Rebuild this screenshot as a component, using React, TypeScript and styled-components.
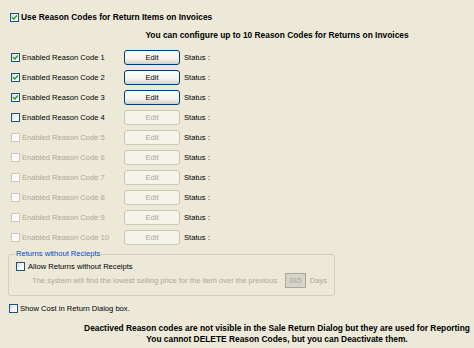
import styled, { createGlobalStyle } from "styled-components";

const GlobalStyle = createGlobalStyle`
  html, body {
    margin: 0;
    padding: 0;
    background: #ece9d8;
  }
  body {
    font-family: "Liberation Sans", Arial, sans-serif;
    font-size: 7.6px;
    color: #000;
  }
`;

const Page = styled.div`
  width: 474px;
  height: 348px;
  box-sizing: border-box;
  padding-top: 7px;
  background: #ece9d8;
  overflow: hidden;
`;

const Box = styled.span<{ $disabled?: boolean }>`
  width: 9px;
  height: 9px;
  flex: none;
  box-sizing: border-box;
  border: 1px solid ${(p) => (p.$disabled ? "#cac8bb" : "#1c5180")};
  background: ${(p) =>
    p.$disabled ? "#fff" : "linear-gradient(135deg, #dcdcd7 0%, #fff 80%)"};
  display: flex;
  align-items: center;
  justify-content: center;
`;

const CheckBox = ({ checked, disabled }: { checked?: boolean; disabled?: boolean }) => (
  <Box $disabled={disabled}>
    {checked && (
      <svg width="7" height="7" viewBox="0 0 7 7">
        <path d="M1 3.2 L2.8 5 L6 1.5" stroke="#21a121" strokeWidth="1.5" fill="none" />
      </svg>
    )}
  </Box>
);

const HeaderRow = styled.label`
  display: flex;
  align-items: center;
  gap: 2px;
  height: 20px;
  padding-left: 10px;
  font-weight: bold;
  font-size: 8.4px;
  white-space: nowrap;
`;

const Centered = styled.div<{ $lh: number }>`
  padding-left: 80px;
  text-align: center;
  font-weight: bold;
  font-size: 8.4px;
  line-height: ${(p) => p.$lh}px;
  white-space: nowrap;
`;

const Rows = styled.div`
  margin-top: 4px;
  display: flex;
  flex-direction: column;
`;

const Row = styled.div`
  display: grid;
  grid-template-columns: 109px 56px auto;
  column-gap: 4px;
  align-items: center;
  height: 20px;
  padding-left: 11px;
`;

const CodeLabel = styled.span<{ $disabled?: boolean }>`
  display: flex;
  align-items: center;
  gap: 2px;
  color: ${(p) => (p.$disabled ? "#aca899" : "#000")};
  white-space: nowrap;
`;

const EditButton = styled.button<{ $disabled?: boolean }>`
  width: 56px;
  height: 15px;
  padding: 0;
  font: inherit;
  border-radius: 3px;
  border: 1px solid ${(p) => (p.$disabled ? "#c9c7ba" : "#003c74")};
  color: ${(p) => (p.$disabled ? "#aca899" : "#000")};
  background: ${(p) =>
    p.$disabled ? "#f5f4ea" : "linear-gradient(#ffffff 0%, #f4f3ee 60%, #d6d0c5 100%)"};
`;

const Status = styled.span`
  color: #000;
`;

const Group = styled.fieldset`
  margin: 1px 0 0 8px;
  width: 327px;
  box-sizing: border-box;
  padding: 0 7px 7px 7px;
  border: 1px solid #d0d0bf;
  border-radius: 3px;
`;

const Legend = styled.legend`
  padding: 0 1px;
  margin-left: -1px;
  color: #0046d5;
  line-height: 12px;
`;

const Option = styled.label`
  display: flex;
  align-items: center;
  gap: 3px;
  height: 12px;
`;

const InfoLine = styled.div`
  display: flex;
  align-items: center;
  height: 16px;
  padding-left: 16px;
  color: #aca899;
  white-space: nowrap;
`;

const DaysInput = styled.span`
  width: 21px;
  height: 15px;
  box-sizing: border-box;
  margin: 0 4px 0 auto;
  border: 1px solid #a9a7a0;
  background: #d6d3c9;
  color: #b8b5a8;
  display: flex;
  align-items: center;
  justify-content: center;
  font-weight: bold;
`;

const ShowCost = styled.label`
  display: flex;
  align-items: center;
  gap: 2px;
  height: 16px;
  margin-top: 4px;
  padding-left: 9px;
`;

const Footer = styled.div`
  margin-top: 7px;
`;

const codes = [1, 2, 3, 4, 5, 6, 7, 8, 9, 10];

export default function App() {
  return (
    <Page>
      <GlobalStyle />
      <HeaderRow>
        <CheckBox checked />
        Use Reason Codes for Return Items on Invoices
      </HeaderRow>
      <Centered $lh={16}>You can configure up to 10 Reason Codes for Returns on Invoices</Centered>
      <Rows>
        {codes.map((n) => {
          const labelOff = n > 4;
          return (
            <Row key={n}>
              <CodeLabel $disabled={labelOff}>
                <CheckBox checked={n <= 3} disabled={labelOff} />
                Enabled Reason Code {n}
              </CodeLabel>
              <EditButton $disabled={n > 3}>Edit</EditButton>
              <Status>Status :</Status>
            </Row>
          );
        })}
      </Rows>
      <Group>
        <Legend>Returns without Reciepts</Legend>
        <Option>
          <CheckBox />
          Allow Returns without Receipts
        </Option>
        <InfoLine>
          The system will find the lowest selling price for the item over the previous
          <DaysInput>365</DaysInput>
          Days
        </InfoLine>
      </Group>
      <ShowCost>
        <CheckBox />
        Show Cost in Return Dialog box.
      </ShowCost>
      <Footer>
        <Centered $lh={11}>
          Deactived Reason codes are not visible in the Sale Return Dialog but they are used for Reporting
        </Centered>
        <Centered $lh={11}>You cannot DELETE Reason Codes, but you can Deactivate them.</Centered>
      </Footer>
    </Page>
  );
}
